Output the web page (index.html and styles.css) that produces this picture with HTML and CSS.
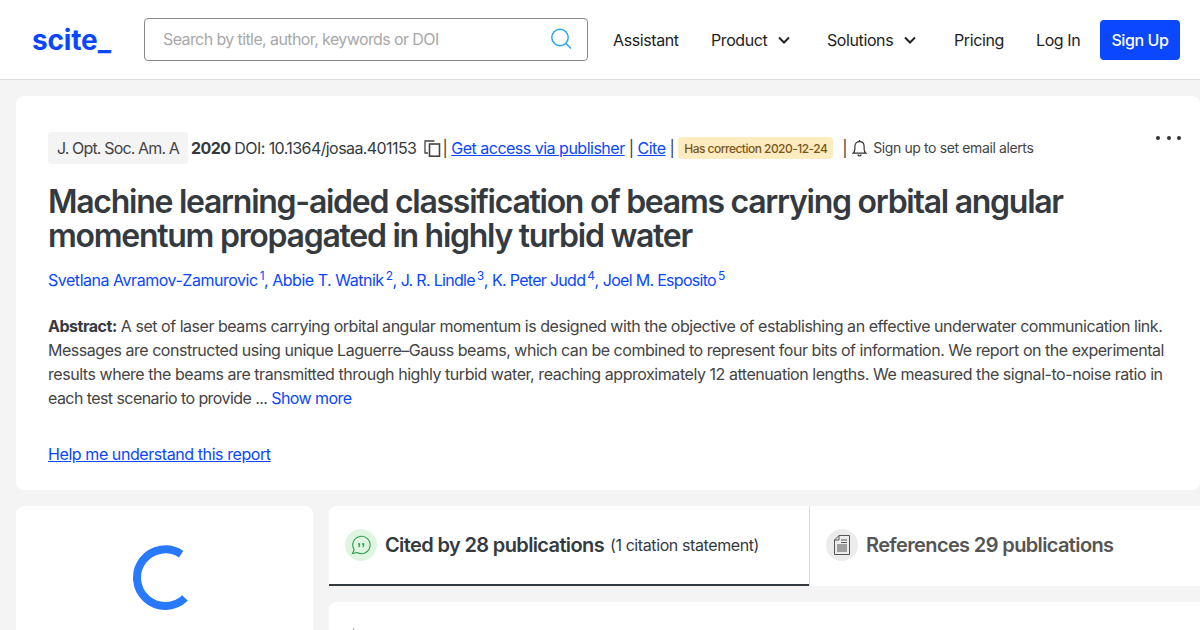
FILE: index.html
```html
<!DOCTYPE html>
<html lang="en">
<head>
<meta charset="utf-8">
<title>scite</title>
<link rel="stylesheet" href="styles.css">
</head>
<body>
<header class="topbar">
  <a class="logo">scite_</a>
  <div class="search">
    <span class="search-text">Search by title, author, keywords or DOI</span>
    <svg class="search-icon" width="24" height="24" viewBox="0 0 24 24" fill="none" stroke="#2aa5f5" stroke-width="1.5"><circle cx="11" cy="10.5" r="8.2"/><path d="M17 16.5l5 5"/></svg>
  </div>
  <nav class="nav">
    <a class="nav-item nav-assistant">Assistant</a>
    <a class="nav-item nav-product">Product<svg class="chev" width="12" height="8" viewBox="0 0 12 8" fill="none" stroke="#222" stroke-width="2"><path d="M1 1.5l5 5 5-5"/></svg></a>
    <a class="nav-item nav-solutions">Solutions<svg class="chev" width="12" height="8" viewBox="0 0 12 8" fill="none" stroke="#222" stroke-width="2"><path d="M1 1.5l5 5 5-5"/></svg></a>
    <a class="nav-item nav-pricing">Pricing</a>
    <a class="nav-item nav-login">Log In</a>
    <a class="signup">Sign Up</a>
  </nav>
</header>
<main class="page">
  <section class="report">
    <div class="meta">
      <span class="journal">J. Opt. Soc. Am. A</span>
      <b class="year">2020</b>
      <span class="doi">DOI: 10.1364/josaa.401153</span>
      <svg class="copy" width="17" height="17" viewBox="0 0 17 17" fill="none" stroke="#444" stroke-width="1.3"><path d="M10.5 1H1v12h3"/><rect x="5.5" y="4" width="10" height="12.2" stroke-width="1.6"/></svg>
      <span class="sep sep-a">|</span>
      <a class="link">Get access via publisher</a>
      <span class="sep">|</span>
      <a class="link">Cite</a>
      <span class="sep">|</span>
      <span class="badge">Has correction 2020-12-24</span>
      <span class="sep sep-b">|</span>
      <svg class="bell" width="15" height="18" viewBox="0 0 15 18" fill="none" stroke="#333" stroke-width="1.2"><path d="M1 14.2c1.3-1 1.9-2.2 1.9-4.2V7.2C2.900 4.500 4.800 2.600 7.500 2.600s4.600 1.900 4.600 4.600V10c0 2 .6 3.200 1.900 4.200z"/><path d="M7.500 1v1.600M5.800 15.500c.3 1 .9 1.500 1.700 1.500s1.400-.5 1.700-1.500"/></svg>
      <span class="alerts">Sign up to set email alerts</span>
    </div>
    <div class="more"><i></i><i></i><i></i></div>
    <h1 class="title">Machine learning-aided classification of beams carrying orbital angular momentum propagated in highly turbid water</h1>
    <p class="authors">
      <a>Svetlana Avramov-Zamurovic</a><sup>1</sup><span class="comma">,</span>
      <a>Abbie T. Watnik</a><sup>2</sup><span class="comma">,</span>
      <a>J. R. Lindle</a><sup>3</sup><span class="comma">,</span>
      <a>K. Peter Judd</a><sup>4</sup><span class="comma">,</span>
      <a>Joel M. Esposito</a><sup>5</sup>
    </p>
    <p class="abstract"><b>Abstract:</b> A set of laser beams carrying orbital angular momentum is designed with the objective of establishing an effective underwater communication link.<br>Messages are constructed using unique Laguerre–Gauss beams, which can be combined to represent four bits of information. We report on the experimental<br><span class="line-three">results where the beams are transmitted through highly turbid water, reaching approximately 12 attenuation lengths. We measured the signal-to-noise ratio in</span><br><span class="line-four">each test scenario to provide ... <a class="show">Show more</a></span></p>
    <a class="help">Help me understand this report</a>
  </section>
  <div class="lower">
    <aside class="side">
      <svg width="56" height="66" viewBox="0 0 56 66" fill="none" stroke="#2979ff" stroke-width="8"><path d="M48.100 9.200A28.300 28.300 0 1 0 52 53"/></svg>
    </aside>
    <div class="content">
      <div class="tabs">
        <div class="tab tab-active">
          <span class="tab-icon green"><svg width="22" height="22" viewBox="0 0 22 22" fill="none" stroke="#2e9e4a" stroke-width="1.100"><path d="M2.500 19.500l1.700-3.800A8.700 8.700 0 1 1 7.200 18.500z"/><path d="M8 10h1.500v1.500c0 .8-.4 1.300-1 1.500M12 10h1.500v1.500c0 .8-.4 1.300-1 1.500" stroke-width="1.300"/></svg></span>
          <span class="tab-title">Cited by 28 publications</span>
          <span class="tab-note">(1 citation statement)</span>
        </div>
        <div class="tab tab-refs">
          <span class="tab-icon grey"><svg width="18" height="22" viewBox="0 0 18 22" fill="none" stroke="#555" stroke-width="1"><path d="M6 1.500h10.500v19h-15V6z"/><path d="M6 1.500V6H1.500"/><path d="M8 6h6M8 8.500h6M4 11h10M4 13h10M4 15h10M4 17h10" stroke-width="1.100"/></svg></span>
          <span class="tab-title">References 29 publications</span>
        </div>
      </div>
      <div class="panel"><span class="panel-mark"></span></div>
    </div>
  </div>
</main>
</body>
</html>
```

FILE: styles.css
```css
* { box-sizing: border-box; }
html, body { margin: 0; height: 630px; overflow: hidden; }
body { background: #f4f4f4; font-family: Inter, "Liberation Sans", sans-serif; color: #343a40; font-size: 16px; }
a { text-decoration: none; }

.topbar { height: 80px; background: #fff; border-bottom: 1px solid #ddd; display: flex; align-items: center; padding: 0 20px 0 32px; }
.logo { width: 112px; font-size: 28px; font-weight: 700; color: #0a47ff; letter-spacing: -0.15px; }
.search { width: 444px; height: 43px; border: 1px solid #8a8a8a; border-radius: 4px; display: flex; align-items: center; justify-content: space-between; padding: 0 14px 2px 18px; }
.search-text { color: #a8a8a8; font-size: 16px; letter-spacing: -0.6px; }
.nav { display: flex; align-items: center; flex: 1; margin-left: 25px; }
.nav-item { color: #222; font-size: 16px; letter-spacing: -0.4px; display: flex; align-items: center; }
.chev { margin-left: 11px; }
.nav-assistant { width: 98px; }
.nav-product { width: 116px; }
.nav-solutions { width: 127px; }
.nav-pricing { width: 82px; }
.nav-login { width: 64px; }
.signup { width: 80px; height: 40px; background: #0a47ff; color: #fff; border-radius: 4px; display: flex; align-items: center; justify-content: center; font-weight: 500; letter-spacing: -0.4px; }

.page { padding: 16px 0 0 16px; }
.report { position: relative; height: 394px; background: #fff; border-radius: 8px; padding: 36px 32px 0; }
.meta { display: flex; align-items: center; height: 32px; font-size: 16px; letter-spacing: -0.5px; white-space: nowrap; }
.journal { background: #f4f4f4; border-radius: 4px; height: 32px; width: 140px; display: flex; align-items: center; justify-content: center; color: #444; letter-spacing: -0.85px; }
.year { margin-left: 3px; font-weight: 700; letter-spacing: -0.6px; }
.doi { margin-left: 4px; letter-spacing: -0.58px; }
.copy { margin-left: 8px; }
.sep { margin: 0 4px; }
.sep-a { margin-left: 1px; }
.link { color: #0a47ff; text-decoration: underline; }
.badge { background: #fdecc0; color: #7a5518; border-radius: 4px; height: 22px; padding: 1px 6px 0; font-size: 12px; font-weight: 500; display: flex; align-items: center; letter-spacing: -0.52px; }
.sep-b { margin: 0 5px 0 9px; }
.alerts { margin-left: 6px; padding-bottom: 1px; font-size: 14px; color: #444; letter-spacing: -0.38px; }
.more { position: absolute; right: 19px; top: 40px; display: flex; gap: 6.5px; }
.more i { width: 4px; height: 4px; border-radius: 50%; background: #333; }
.title { margin: 21px 0 0; font-size: 32px; line-height: 34px; font-weight: 600; letter-spacing: -1.27px; }
.authors { margin: 15px 0 0; font-size: 16px; line-height: 24px; letter-spacing: -0.47px; white-space: nowrap; }
.authors a { color: #0a47ff; }
.authors a:nth-of-type(n+3) { letter-spacing: -0.7px; }
.authors sup { font-size: 12px; line-height: 0; color: #0a47ff; margin-left: 2px; }
.comma { color: #0a47ff; }
.abstract { margin: 22px 0 0; font-size: 16px; line-height: 24px; letter-spacing: -0.47px; white-space: nowrap; color: #444; }
.abstract b { color: #343a40; }
.line-three { letter-spacing: -0.45px; }
.line-four { letter-spacing: -0.57px; }
.show { color: #0a47ff; }
.help { display: block; margin-top: 32px; color: #0a47ff; text-decoration: underline; letter-spacing: -0.42px; line-height: 24px; }

.lower { display: flex; gap: 16px; margin-top: 16px; }
.side { width: 297px; height: 124px; background: #fff; border-radius: 8px 8px 0 0; padding: 39px 0 0 117px; flex: none; }
.content { flex: 1; }
.tabs { display: flex; height: 80px; background: #fff; border-radius: 8px 0 0 0; }
.tab { display: flex; align-items: center; white-space: nowrap; }
.tab-active { width: 480px; padding-left: 16px; border-bottom: 2px solid #343a40; }
.tab-refs { flex: 1; padding: 0 0 2px 16px; border-left: 1px solid #ddd; }
.tab-icon { width: 32px; height: 32px; border-radius: 50%; display: flex; align-items: center; justify-content: center; margin-right: 8px; }
.green { background: #e0f5e1; }
.grey { background: #ececec; }
.tab-title { font-size: 20px; font-weight: 600; letter-spacing: -0.63px; }
.tab-refs .tab-title { color: #555; }
.tab-note { margin-left: 6px; font-size: 16px; letter-spacing: -0.4px; }
.panel { margin-top: 16px; height: 28px; background: #fff; border-radius: 8px 0 0 0; padding: 26px 0 0 24px; }
.panel-mark { display: block; width: 1px; height: 2px; background: #aaa; }
```
